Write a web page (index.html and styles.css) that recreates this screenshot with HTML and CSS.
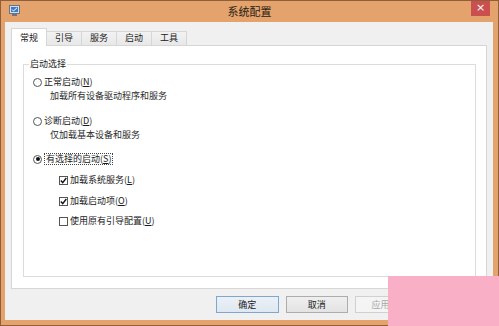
FILE: index.html
```html
<!DOCTYPE html>
<html lang="zh-CN">
<head>
<meta charset="utf-8">
<title>系统配置</title>
<link rel="stylesheet" href="styles.css">
</head>
<body>
<div class="window">
  <div class="titlebar">
    <span class="app-icon">
      <svg width="11" height="11" viewBox="0 0 11 11">
        <rect x="0.5" y="0.5" width="10" height="8" fill="#d8dde4" stroke="#6b7685"/>
        <rect x="2" y="2" width="7" height="5" fill="#3d7cc9"/>
        <path d="M3 4.5 L4.5 6 L8 2.8" stroke="#fff" stroke-width="1" fill="none"/>
        <rect x="3" y="9" width="5" height="2" fill="#6b7685"/>
      </svg>
    </span>
    <span class="title">系统配置</span>
    <span class="close-cell"><span class="close">×</span></span>
  </div>
  <div class="client">
    <div class="tabs">
      <div class="tab active">常规</div>
      <div class="tab">引导</div>
      <div class="tab">服务</div>
      <div class="tab">启动</div>
      <div class="tab">工具</div>
    </div>
    <div class="panel">
      <div class="group">
        <span class="group-label">启动选择</span>
        <div class="option"><span class="radio"></span><span>正常启动(<u>N</u>)</span></div>
        <div class="desc">加载所有设备驱动程序和服务</div>
        <div class="option opt2"><span class="radio"></span><span>诊断启动(<u>D</u>)</span></div>
        <div class="desc">仅加载基本设备和服务</div>
        <div class="option opt3"><span class="radio checked"></span><span class="focus">有选择的启动(<u>S</u>)</span></div>
        <div class="check c1"><span class="box on"><svg width="7" height="7" viewBox="0 0 7 7"><path d="M0.8 3.6 L2.7 5.6 L6.3 1" stroke="#111" stroke-width="1.4" fill="none"/></svg></span><span>加载系统服务(<u>L</u>)</span></div>
        <div class="check c2"><span class="box on"><svg width="7" height="7" viewBox="0 0 7 7"><path d="M0.8 3.6 L2.7 5.6 L6.3 1" stroke="#111" stroke-width="1.4" fill="none"/></svg></span><span>加载启动项(<u>O</u>)</span></div>
        <div class="check c3"><span class="box"></span><span>使用原有引导配置(<u>U</u>)</span></div>
      </div>
    </div>
    <div class="buttons">
      <button class="btn default">确定</button>
      <button class="btn">取消</button>
      <button class="btn disabled">应用(A)</button>
      <button class="btn">帮助</button>
    </div>
  </div>
  <div class="pink"></div>
</div>
</body>
</html>
```
FILE: styles.css
```css
* { box-sizing: border-box; }
html, body { margin: 0; padding: 0; }
body {
  width: 499px;
  height: 326px;
  overflow: hidden;
  font-family: "Noto Sans CJK SC", "Microsoft YaHei", sans-serif;
  font-size: 9px;
  color: #1a1a1a;
}
.window {
  position: relative;
  width: 499px;
  height: 326px;
  background: #e4a26c;
  border: 1px solid #8e5f3a;
  display: flex;
  flex-direction: column;
}
.titlebar {
  height: 21px;
  display: grid;
  grid-template-columns: 1fr auto 1fr;
  align-items: start;
}
.app-icon {
  padding-left: 8px;
  padding-top: 4px;
  line-height: 0;
}
.title {
  font-size: 11px;
  line-height: 20px;
  color: #2a1e14;
}
.close-cell {
  display: flex;
  justify-content: flex-end;
  padding-right: 8px;
}
.close {
  width: 19px;
  height: 15px;
  background: #c9504f;
  color: #fff;
  font-family: "DejaVu Sans", sans-serif;
  font-size: 11px;
  line-height: 14px;
  text-align: center;
}
.client {
  flex: 1;
  margin: 0 5px 5px 4px;
  background: #f0f0f0;
  padding: 6px 6px 0 6px;
  display: flex;
  flex-direction: column;
}
.tabs {
  height: 18px;
  display: flex;
  align-items: flex-end;
  margin-bottom: -1px;
}
.tab {
  position: relative;
  width: 36px;
  height: 14px;
  margin-bottom: 1px;
  margin-left: -1px;
  border: 1px solid #d6d6d6;
  border-bottom: none;
  background: linear-gradient(#f2f2f2, #e8e8e8);
  text-align: center;
  line-height: 12px;
  color: #222;
}
.tab.active {
  z-index: 1;
  height: 18px;
  margin-bottom: 0;
  margin-left: 0;
  background: #fff;
  line-height: 17px;
}
.panel {
  height: 244px;
  background: #fff;
  border: 1px solid #d6d6d6;
  padding: 18px 10px 0 11px;
}
.group {
  position: relative;
  height: 213px;
  border: 1px solid #dcdcdc;
  padding: 10px 0 0 9px;
}
.group-label {
  position: absolute;
  top: -8px;
  left: 5px;
  padding: 0 1px;
  background: #fff;
  line-height: 14px;
  color: #222;
}
.option, .check, .desc {
  height: 14px;
  line-height: 14px;
  display: flex;
  align-items: center;
  white-space: nowrap;
}
.desc { padding-left: 17px; color: #2a2a2a; }
.opt2 { margin-top: 11px; }
.opt3 { margin-top: 10px; }
.radio {
  width: 9px;
  height: 9px;
  border: 1px solid #555;
  border-radius: 50%;
  background: #fff;
  margin-right: 2px;
  display: flex;
  align-items: center;
  justify-content: center;
}
.radio.checked::after {
  content: "";
  width: 4px;
  height: 4px;
  border-radius: 50%;
  background: #111;
}
.focus {
  display: inline-flex;
  align-items: center;
  height: 12px;
  border: 1px dotted #444;
  line-height: 10px;
  padding: 0 1px;
}
.check { margin-left: 26px; }
.c1 { margin-top: 7px; }
.c2 { margin-top: 7px; }
.c3 { margin-top: 6px; }
.box {
  width: 9px;
  height: 9px;
  border: 1px solid #555;
  background: #fff;
  margin-right: 2px;
  display: flex;
  align-items: center;
  justify-content: center;
  line-height: 0;
}
u { text-decoration: underline; text-underline-offset: 1px; }
.buttons {
  display: flex;
  gap: 7px;
  margin-top: 7px;
  padding-left: 205px;
}
.btn {
  width: 63px;
  height: 17px;
  padding: 0;
  font-family: inherit;
  font-size: 9px;
  color: #1a1a1a;
  border: 1px solid #adadad;
  background: linear-gradient(#efefef, #e3e3e3);
  line-height: 14px;
}
.btn.default {
  border-color: #7ea6cf;
  background: linear-gradient(#eaf0f6, #dfe8f1);
}
.btn.disabled {
  color: #a8a8a8;
  border-color: #d0d0d0;
  background: #f4f4f4;
}
.pink {
  position: absolute;
  left: 387px;
  top: 275px;
  width: 112px;
  height: 51px;
  background: #f9afc5;
}
```
